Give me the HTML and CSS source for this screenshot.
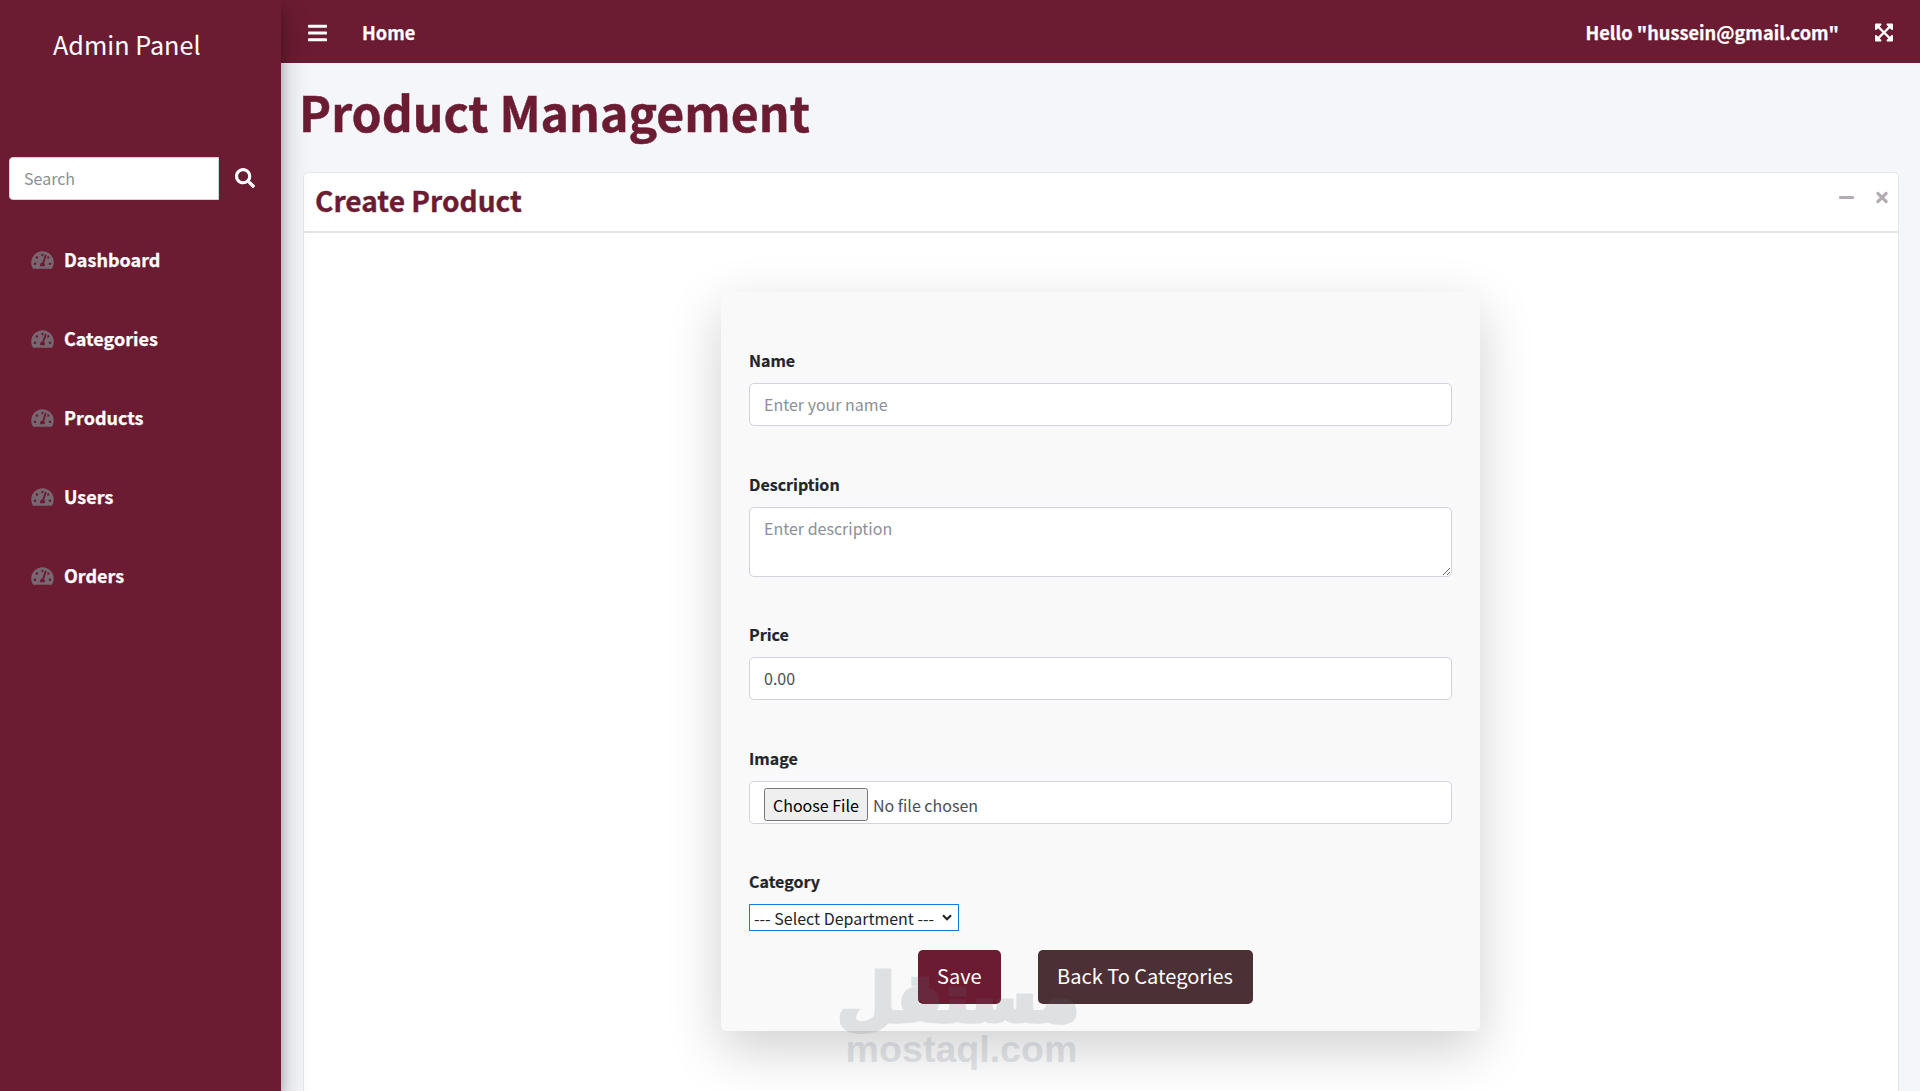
FILE: index.html
```html
<!DOCTYPE html>
<html lang="en">
<head>
<meta charset="utf-8">
<title>Product Management</title>
<link rel="stylesheet" href="styles.css">
</head>
<body>
<svg class="defs" width="0" height="0">
  <symbol id="gauge" viewBox="0 0 576 512"><path d="M288 32C128.94 32 0 160.94 0 320c0 52.8 14.25 102.26 39.06 144.8 5.61 9.62 16.3 15.2 27.44 15.2h443c11.14 0 21.83-5.58 27.44-15.2C561.75 422.26 576 372.8 576 320c0-159.06-128.94-288-288-288zm0 64c14.71 0 26.58 10.13 30.32 23.65-1.11 2.26-2.64 4.23-3.45 6.67l-9.22 27.67c-5.13 3.49-10.97 6.01-17.64 6.01-17.67 0-32-14.33-32-32S270.33 96 288 96zM96 384c-17.67 0-32-14.33-32-32s14.33-32 32-32 32 14.33 32 32-14.33 32-32 32zm48-160c-17.67 0-32-14.33-32-32s14.33-32 32-32 32 14.33 32 32-14.33 32-32 32zm246.77-72.41l-61.33 184C343.13 347.33 352 364.54 352 384c0 11.72-3.38 22.55-8.88 32H232.88c-5.5-9.45-8.88-20.28-8.88-32 0-33.94 26.5-61.43 59.9-63.59l61.34-184.01c4.17-12.56 17.73-19.45 30.36-15.17 12.57 4.19 19.35 17.77 15.17 30.36zm14.66 57.2l15.52-46.55c3.47-1.29 7.13-2.23 11.05-2.23 17.67 0 32 14.33 32 32s-14.33 32-32 32c-11.38-.01-20.89-6.28-26.57-15.22zM480 384c-17.67 0-32-14.33-32-32s14.33-32 32-32 32 14.33 32 32-14.33 32-32 32z"/></symbol>
</svg>
<div class="layout">
  <aside class="sidebar">
    <div class="brand">Admin Panel</div>
    <form class="search">
      <input class="search-input" type="text" placeholder="Search">
      <svg class="search-icon" viewBox="0 0 512 512"><path d="M505 442.7L405.3 343c-4.5-4.5-10.6-7-17-7H372c27.6-35.3 44-79.7 44-128C416 93.1 322.9 0 208 0S0 93.1 0 208s93.1 208 208 208c48.3 0 92.7-16.4 128-44v16.3c0 6.4 2.5 12.5 7 17l99.7 99.7c9.4 9.4 24.6 9.4 33.9 0l28.3-28.3c9.4-9.4 9.4-24.6.1-34zM208 336c-70.7 0-128-57.2-128-128 0-70.7 57.2-128 128-128 70.7 0 128 57.2 128 128 0 70.7-57.2 128-128 128z"/></svg>
    </form>
    <nav class="menu">
      <a class="menu-item"><svg class="menu-icon"><use href="#gauge"/></svg>Dashboard</a>
      <a class="menu-item"><svg class="menu-icon"><use href="#gauge"/></svg>Categories</a>
      <a class="menu-item"><svg class="menu-icon"><use href="#gauge"/></svg>Products</a>
      <a class="menu-item"><svg class="menu-icon"><use href="#gauge"/></svg>Users</a>
      <a class="menu-item"><svg class="menu-icon"><use href="#gauge"/></svg>Orders</a>
    </nav>
  </aside>
  <div class="main">
    <header class="topbar">
      <svg class="bars" viewBox="0 0 448 512"><path d="M16 132h416c8.837 0 16-7.163 16-16V76c0-8.837-7.163-16-16-16H16C7.163 60 0 67.163 0 76v40c0 8.837 7.163 16 16 16zm0 160h416c8.837 0 16-7.163 16-16v-40c0-8.837-7.163-16-16-16H16c-8.837 0-16 7.163-16 16v40c0 8.837 7.163 16 16 16zm0 160h416c8.837 0 16-7.163 16-16v-40c0-8.837-7.163-16-16-16H16c-8.837 0-16 7.163-16 16v40c0 8.837 7.163 16 16 16z"/></svg>
      <a class="home">Home</a>
      <span class="hello">Hello "hussein@gmail.com"</span>
      <svg class="expand" viewBox="0 0 448 512"><path d="M448 344v112a23.94 23.94 0 0 1-24 24H312c-21.39 0-32.09-25.9-17-41l36.2-36.2L224 295.6 116.77 402.9 153 439c15.09 15.1 4.39 41-17 41H24a23.94 23.94 0 0 1-24-24V344c0-21.4 25.89-32.1 41-17l36.19 36.2L184.46 256 77.18 148.7 41 185c-15.1 15.1-41 4.4-41-17V56a23.94 23.94 0 0 1 24-24h112c21.39 0 32.09 25.9 17 41l-36.2 36.2L224 216.4l107.23-107.3L295 73c-15.09-15.1-4.39-41 17-41h112a23.94 23.94 0 0 1 24 24v112c0 21.4-25.89 32.1-41 17l-36.19-36.2L263.54 256l107.28 107.3L407 327.1c15.1-15.2 41-4.5 41 16.9z"/></svg>
    </header>
    <main class="content">
      <h1 class="page-title">Product Management</h1>
      <section class="card">
        <div class="card-header">
          <h2 class="card-title">Create Product</h2>
          <div class="card-tools">
            <svg class="tool" viewBox="0 0 448 512"><path d="M416 208H32c-17.67 0-32 14.33-32 32v32c0 17.67 14.33 32 32 32h384c17.67 0 32-14.33 32-32v-32c0-17.67-14.33-32-32-32z"/></svg>
            <svg class="tool tool-x" viewBox="0 0 352 512"><path d="M242.72 256l100.07-100.07c12.28-12.28 12.28-32.19 0-44.48l-22.24-22.24c-12.28-12.28-32.19-12.28-44.48 0L176 189.28 75.93 89.21c-12.28-12.28-32.19-12.28-44.48 0L9.21 111.45c-12.28 12.28-12.28 32.19 0 44.48L109.28 256 9.21 356.07c-12.28 12.28-12.28 32.19 0 44.48l22.24 22.24c12.28 12.28 32.2 12.28 44.48 0L176 322.72l100.07 100.07c12.28 12.28 32.2 12.28 44.48 0l22.24-22.24c12.28-12.28 12.28-32.19 0-44.48L242.72 256z"/></svg>
          </div>
        </div>
        <div class="card-body">
          <form class="product-form">
            <div class="field">
              <label class="label">Name</label>
              <input class="control" type="text" placeholder="Enter your name">
            </div>
            <div class="field">
              <label class="label">Description</label>
              <textarea class="control textarea" placeholder="Enter description"></textarea>
            </div>
            <div class="field">
              <label class="label">Price</label>
              <input class="control" type="text" value="0.00">
            </div>
            <div class="field">
              <label class="label">Image</label>
              <input class="control file" type="file">
            </div>
            <div class="field field-last">
              <label class="label">Category</label>
              <select class="select"><option>--- Select Department ---</option></select>
            </div>
            <div class="actions">
              <button class="btn btn-save" type="button">Save</button>
              <button class="btn btn-back" type="button">Back To Categories</button>
            </div>
          </form>
        </div>
      </section>
    </main>
  </div>
</div>
<div class="watermark">
  <div class="wm-ar" dir="rtl">مستقل</div>
  <div class="wm-en">mostaql.com</div>
</div>
</body>
</html>
```
FILE: styles.css
```css
* { box-sizing: border-box; }
html, body { margin: 0; height: 100%; }
body {
  font-family: "Noto Sans CJK JP", "Noto Sans", sans-serif;
  font-size: 16px;
  line-height: 1.5;
  color: #212529;
  background: #f4f6f9;
  overflow: hidden;
}
.defs { position: absolute; }
.layout { display: flex; height: 1091px; }

.sidebar {
  width: 281px;
  flex: none;
  background: #6b1c32;
  position: relative;
  z-index: 2;
  box-shadow: 0 14px 28px rgba(0,0,0,.25), 0 10px 10px rgba(0,0,0,.22);
  color: #fff;
}
.brand {
  height: 90px;
  padding: 23px 0 0 53px;
  font-size: 25.2px;
  line-height: 42px;
  font-weight: 400;
}
.search {
  display: flex;
  align-items: center;
  margin-top: 67px;
  padding-left: 9px;
  gap: 16px;
}
.search-input {
  width: 210px;
  height: 43px;
  border: 1px solid #ced4da;
  border-radius: 4px 0 0 4px;
  padding: 0 14px 2px;
  font: inherit;
  background: #fff;
}
.search-input::placeholder { color: #8a8f95; }
.search-icon { width: 20px; height: 20px; fill: #fff; margin-top: -2px; }
.menu { display: flex; flex-direction: column; margin-top: 20px; }
.menu-item {
  display: flex;
  align-items: center;
  height: 79px;
  padding-left: 31px;
  gap: 10px;
  font-size: 18px;
  font-weight: 700;
  color: #fff;
  -webkit-text-stroke: .25px #fff;
}
.menu-icon { width: 23px; height: 20px; fill: #786670; }

.main { flex: 1; display: flex; flex-direction: column; min-width: 0; }
.topbar {
  height: 63px;
  flex: none;
  background: #6b1c32;
  display: flex;
  align-items: center;
  color: #fff;
  padding: 2px 27px 0;
  font-size: 18.2px;
  font-weight: 700;
  -webkit-text-stroke: .25px #fff;
}
.bars { width: 19px; height: 22px; fill: #fff; }
.home { margin-left: 35px; }
.hello { margin-left: auto; }
.expand { width: 18px; height: 21px; fill: #fff; margin-left: 36px; }

.content { flex: 1; padding: 0 21px 0 22px; min-height: 0; }
.page-title {
  margin: 18px 0 0 -4px;
  font-size: 48.2px;
  line-height: 60px;
  font-weight: 700;
  color: #6b1c32;
  -webkit-text-stroke: .5px #6b1c32;
}
.card {
  margin-top: 31px;
  height: 920px;
  background: #fff;
  border: 1px solid #e6e7ea;
  border-radius: 5px 5px 0 0;
}
.card-header {
  height: 60px;
  border-bottom: 2px solid #e3e4e6;
  display: flex;
  align-items: center;
  justify-content: space-between;
  padding: 0 10px 4px 11px;
}
.card-title {
  margin: 0;
  font-size: 28.1px;
  font-weight: 700;
  line-height: 36px;
  color: #6b1c32;
  -webkit-text-stroke: .35px #6b1c32;
}
.card-tools { display: flex; align-items: center; gap: 22px; margin-top: -6px; }
.tool { width: 15px; height: 17px; fill: #b3adb3; display: block; }
.tool-x { width: 12px; }

.card-body { display: flex; justify-content: center; padding: 59px 1px 0 0; }
.product-form {
  width: 759px;
  height: 739px;
  background: #f9f9f9;
  padding: 56px 28px 0;
  box-shadow: 0 18px 54px rgba(0,0,0,.19);
  border-radius: 5px;
}
.field { margin-bottom: 45.6px; }
.field-last { margin-bottom: 0; }
.label {
  display: block;
  font-size: 16px;
  line-height: 24px;
  font-weight: 700;
  margin-bottom: 11px;
  color: #212529;
  -webkit-text-stroke: .2px #212529;
}
.control {
  display: block;
  width: 100%;
  height: 43px;
  border: 1.2px solid #ced4da;
  border-radius: 5px;
  background: #fff;
  padding: 6px 14px 8px;
  font: inherit;
  color: #495057;
}
.control::placeholder { color: #8b9097; }
.textarea { height: 70px; padding: 8px 14px; }
.file { padding: 6.5px 14px 0; }
.file::file-selector-button { font: inherit; margin-right: 5px; height: 33px; padding: 0 7px; }
.select {
  display: block;
  width: 210px;
  height: 27px;
  border: 1.5px solid #1379e6;
  border-radius: 0;
  appearance: none;
  background: #fff url("data:image/svg+xml,%3Csvg xmlns='http://www.w3.org/2000/svg' viewBox='0 0 10 7'%3E%3Cpath d='M1 1.2l4 4 4-4' fill='none' stroke='%23212529' stroke-width='2.2'/%3E%3C/svg%3E") no-repeat right 6px center / 10px 7px;
  font: inherit;
  line-height: 20px;
  padding: 0 0 0 4px;
  color: #212529;
}
.actions { display: flex; gap: 37.5px; margin-top: 18.6px; padding-left: 169px; }
.btn {
  height: 54px;
  border: 0;
  border-radius: 5px;
  color: #fff;
  font: inherit;
  font-size: 20px;
  padding: 0 19px 2px;
}
.btn-save { background: #6b1c32; }
.btn-back { background: #4b3035; padding-right: 20px; }

.watermark {
  position: absolute;
  left: 848px;
  top: 966px;
  width: 231px;
  text-align: center;
  z-index: 5;
  pointer-events: none;
  color: #5f6978;
  opacity: .17;
}
.wm-ar {
  font-family: "DejaVu Sans", sans-serif;
  font-weight: 700;
  font-size: 66px;
  line-height: 66px;
  -webkit-text-stroke: 5px #5f6978;
}
.wm-en {
  margin-left: -4px;
  font-family: "Liberation Sans", sans-serif;
  font-weight: 700;
  font-size: 37.6px;
  line-height: 34px;
}
```
